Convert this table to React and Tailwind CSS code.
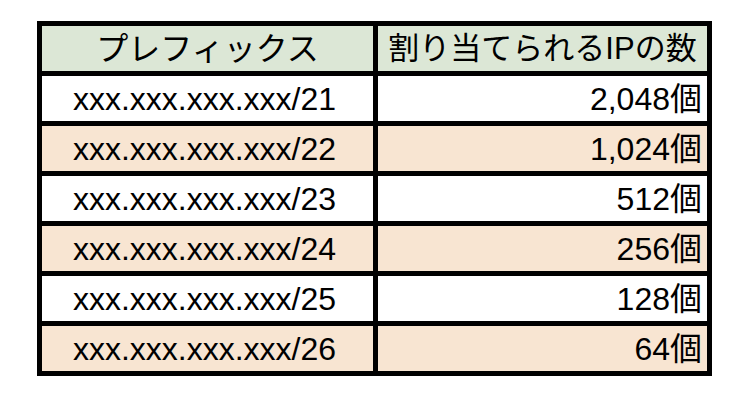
const rows = [
  { prefix: "xxx.xxx.xxx.xxx/21", count: "2,048個" },
  { prefix: "xxx.xxx.xxx.xxx/22", count: "1,024個" },
  { prefix: "xxx.xxx.xxx.xxx/23", count: "512個" },
  { prefix: "xxx.xxx.xxx.xxx/24", count: "256個" },
  { prefix: "xxx.xxx.xxx.xxx/25", count: "128個" },
  { prefix: "xxx.xxx.xxx.xxx/26", count: "64個" },
]

function App() {
  return (
    <div className="w-[736px] h-[404px] bg-white pt-[21px] pl-[37px] font-['Liberation_Sans','Noto_Sans_CJK_JP',sans-serif] text-[32px] text-black">
      <div className="grid grid-cols-[331px_329px] auto-rows-[45px] gap-[5px] p-[5px] bg-black w-fit">
        <div className="bg-[#dce7d6] flex items-center justify-center leading-none">プレフィックス</div>
        <div className="bg-[#dce7d6] flex items-center justify-center leading-none whitespace-nowrap text-[31px]">割り当てられるIPの数</div>
        {rows.map((row, i) => (
          <div key={row.prefix} className="contents">
            <div className={`${i % 2 ? "bg-[#f8e5d2]" : "bg-white"} flex items-center justify-center pr-[6px] leading-none`}>
              {row.prefix}
            </div>
            <div className={`${i % 2 ? "bg-[#f8e5d2]" : "bg-white"} flex items-center justify-end pr-[5px] leading-none`}>
              {row.count}
            </div>
          </div>
        ))}
      </div>
    </div>
  )
}

export default App
